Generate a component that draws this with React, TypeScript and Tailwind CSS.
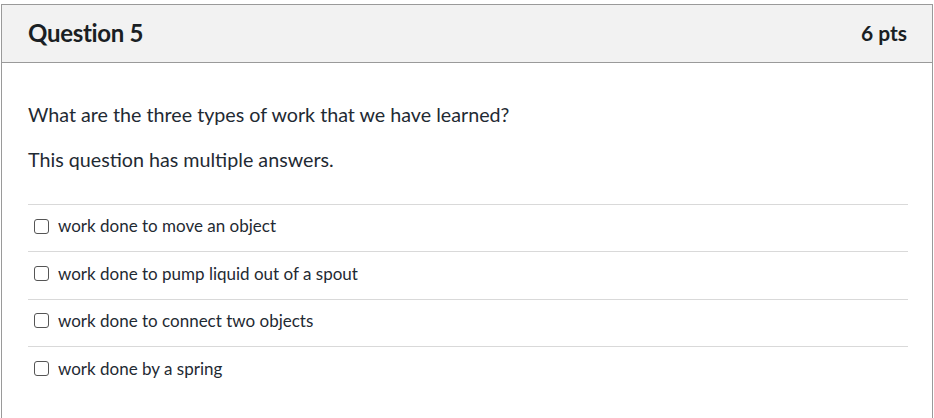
export default function App() {
  const answers = [
    "work done to move an object",
    "work done to pump liquid out of a spout",
    "work done to connect two objects",
    "work done by a spring",
  ];
  return (
    <div className="w-[934px] h-[418px] bg-white overflow-hidden" style={{ fontFamily: "Lato, 'Noto Sans', sans-serif" }}>
      <div className="mt-[4px] ml-[1px] w-[932px] h-[440px] border border-[#9a9a9a] bg-white">
        <div className="h-[58px] bg-[#f2f2f2] border-b border-[#9a9a9a] flex items-center justify-between pl-[26px] pr-[25px] pb-[2px]">
          <div className="text-[24px] font-bold text-[#1a1f24] tracking-[-0.3px]">Question 5</div>
          <div className="text-[21px] font-bold text-[#1a1f24]">6 pts</div>
        </div>
        <div className="pl-[26px] pr-[24px] pt-[40px] text-[#2d3b45]">
          <p className="text-[19.7px] leading-[24px] text-[#1f2a33]">What are the three types of work that we have learned?</p>
          <p className="text-[19.7px] leading-[24px] mt-[21px] text-[#1f2a33]">This question has multiple answers.</p>
          <div className="mt-[32px]">
            {answers.map((a) => (
              <div key={a} className="border-t border-[#d9d9d9] h-[47.4px] flex items-center pl-[6px] pb-[4px]">
                <span className="w-[15px] h-[15px] border border-[#555] rounded-[3px] bg-white mr-[9px]" />
                <span className="text-[17px] text-[#1f2a33]">{a}</span>
              </div>
            ))}
          </div>
        </div>
      </div>
    </div>
  );
}
